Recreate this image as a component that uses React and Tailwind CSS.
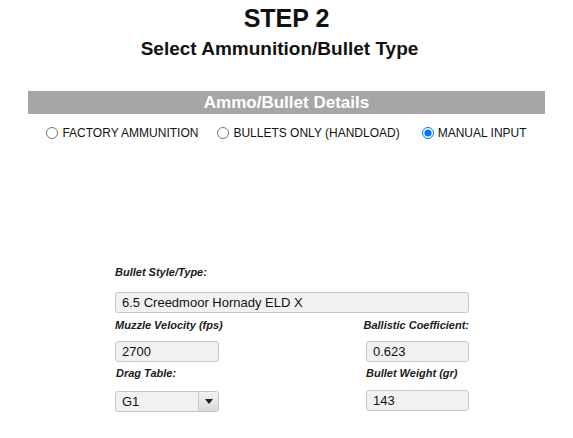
import React from "react";

function Field({ value, className = "" }) {
  return (
    <div
      className={`h-[21px] border border-[#c6c6c6] rounded-[3px] bg-[#f1f1f1] flex items-center pl-[6px] text-[13px] text-[#111] ${className}`}
    >
      {value}
    </div>
  );
}

function Label({ children, className = "" }) {
  return (
    <div className={`h-[14px] leading-[14px] text-[11px] font-bold italic text-[#1a1a1a] ${className}`}>
      {children}
    </div>
  );
}

export default function App() {
  return (
    <div className="w-[573px] h-[438px] bg-white font-['Liberation_Sans',Arial,sans-serif] text-[#111] overflow-hidden">
      <div className="pt-[5px] text-center text-[25px] leading-[26px] font-bold text-[#111]">STEP 2</div>
      <div className="mt-[7px] pr-[14px] text-center text-[19px] leading-[22px] font-bold text-[#111]">
        Select Ammunition/Bullet Type
      </div>
      <div className="mt-[31px] mx-[28px] h-[23px] bg-[#a6a6a6] flex items-center justify-center text-white text-[17px] font-bold">
        Ammo/Bullet Details
      </div>
      <div className="mt-[11px] flex items-center justify-center text-[12px] leading-[16px] text-[#111]">
        <label className="flex items-center gap-[4px]">
          <input type="radio" name="ammo" className="m-0 w-[12px] h-[12px]" readOnly />
          FACTORY AMMUNITION
        </label>
        <label className="flex items-center gap-[4px] ml-[19px]">
          <input type="radio" name="ammo" className="m-0 w-[12px] h-[12px]" readOnly />
          BULLETS ONLY (HANDLOAD)
        </label>
        <label className="flex items-center gap-[4px] ml-[22px]">
          <input type="radio" name="ammo" className="m-0 w-[12px] h-[12px]" defaultChecked />
          MANUAL INPUT
        </label>
      </div>

      <div className="ml-[115px] w-[354px] mt-[124px]">
        <Label>Bullet Style/Type:</Label>
        <Field value="6.5 Creedmoor Hornady ELD X" className="mt-[13px] w-[354px]" />
        <div className="flex justify-between mt-[5px]">
          <Label>Muzzle Velocity (fps)</Label>
          <Label>Ballistic Coefficient:</Label>
        </div>
        <div className="flex justify-between mt-[9px]">
          <Field value="2700" className="w-[104px] h-[20px]" />
          <Field value="0.623" className="w-[103px] h-[20px]" />
        </div>
        <div className="flex justify-between mt-[4px]">
          <Label className="pl-[1px]">Drag Table:</Label>
          <Label className="w-[103px]">Bullet Weight (gr)</Label>
        </div>
        <div className="flex justify-between items-start mt-[10px]">
          <div className="w-[104px] h-[21px] mt-[1px] border border-[#c6c6c6] rounded-[3px] bg-[#f1f1f1] flex text-[13px]">
            <div className="flex-1 flex items-center pl-[6px]">G1</div>
            <div className="w-[20px] border-l border-[#c6c6c6] bg-gradient-to-b from-[#f4f4f4] to-[#d9d9d9] flex items-center justify-center rounded-r-[3px]">
              <svg width="8" height="5" viewBox="0 0 8 5">
                <path d="M0 0 L8 0 L4 5 Z" fill="#222" />
              </svg>
            </div>
          </div>
          <Field value="143" className="w-[103px] h-[20px]" />
        </div>
      </div>
    </div>
  );
}
